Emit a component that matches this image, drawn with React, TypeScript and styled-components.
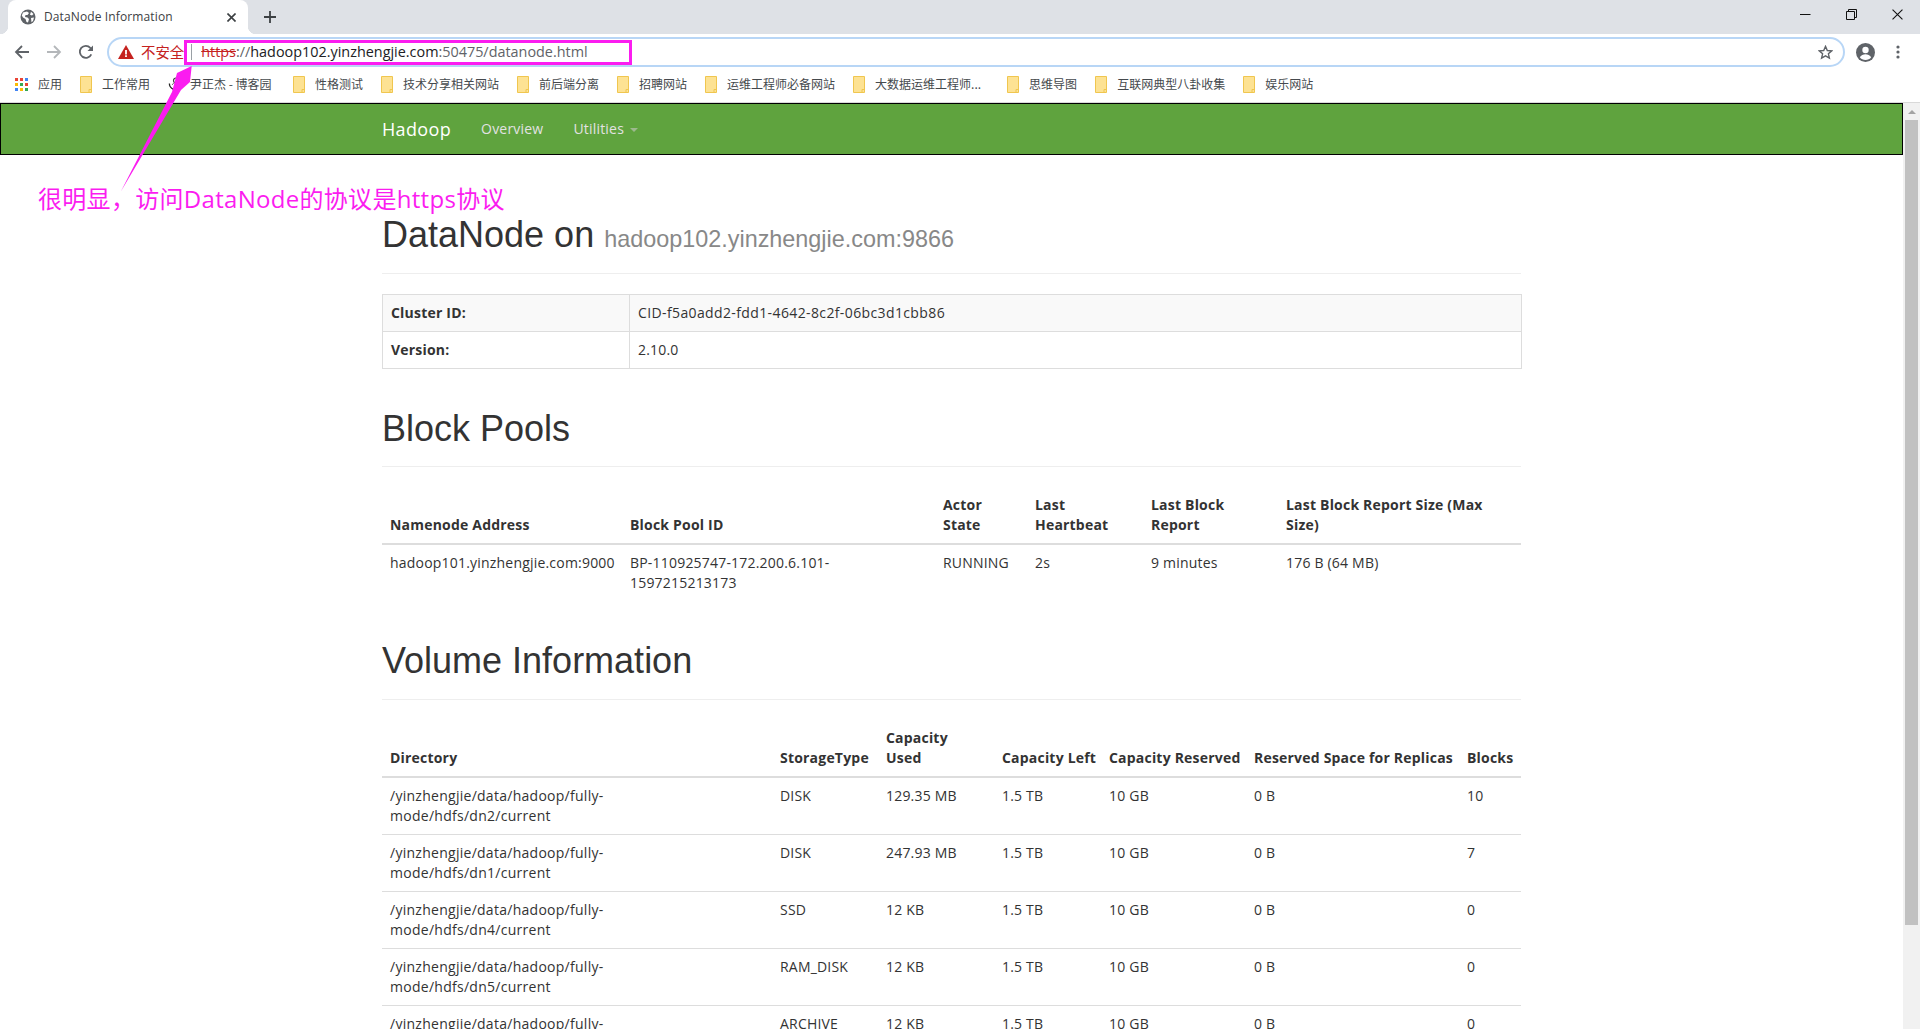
import React from "react";
import styled, { createGlobalStyle } from "styled-components";

const UI = `"Open Sans", "Noto Sans CJK SC", sans-serif`;
const CJK = `"Noto Sans CJK SC", "Open Sans", sans-serif`;
const HEAD = `"Liberation Sans", Arial, sans-serif`;
const MAGENTA = "#fb1cf0";

const Global = createGlobalStyle`
  html, body { margin: 0; padding: 0; height: 100%; overflow: hidden; background: #fff; }
  * { box-sizing: border-box; }
  body { font-family: ${UI}; font-size: 14px; line-height: 20px; color: #333; }
`;

const Screen = styled.div`
  position: relative;
  display: flex;
  flex-direction: column;
  width: 1920px;
  height: 1029px;
  overflow: hidden;
  background: #fff;
`;

const TabStrip = styled.div`
  display: flex;
  align-items: flex-start;
  height: 34px;
  flex: none;
  padding-left: 8px;
  background: #dee1e6;
`;

const Tab = styled.div`
  position: relative;
  display: flex;
  align-items: center;
  width: 240px;
  height: 34px;
  padding: 0 12px 0 12px;
  background: #fff;
  border-radius: 8px 8px 0 0;
  &::before, &::after {
    content: "";
    position: absolute;
    bottom: 0;
    width: 8px;
    height: 8px;
  }
  &::before { left: -8px; background: radial-gradient(circle at 0 0, #dee1e6 8px, #fff 8.5px); }
  &::after { right: -8px; background: radial-gradient(circle at 100% 0, #dee1e6 8px, #fff 8.5px); }
`;

const TabTitle = styled.span`
  flex: 1;
  margin-left: 8px;
  font-size: 12px;
  color: #3c4043;
  white-space: nowrap;
  letter-spacing: 0.12px;
`;

const NewTab = styled.div`
  display: flex;
  width: 16px;
  height: 34px;
  align-items: center;
  margin-left: 16px;
`;

const WindowControls = styled.div`
  display: flex;
  gap: 35px;
  margin-left: auto;
  padding: 9px 17px 0 0;
`;

const Toolbar = styled.div`
  display: flex;
  align-items: center;
  height: 33px;
  flex: none;
  padding: 3px 14px 0 14px;
  background: #fff;
`;

const NavIcons = styled.div`
  display: flex;
  align-items: center;
  gap: 16px;
  width: 93px;
`;

const Omnibox = styled.div`
  display: flex;
  align-items: center;
  width: 1738px;
  height: 30px;
  padding: 0 10px 0 9px;
  border: 2px solid #b8d6f6;
  border-radius: 15px;
  background: #fff;
`;

const Insecure = styled.span`
  margin-left: 7px;
  font-family: ${CJK};
  font-size: 14.4px;
  color: #c5221f;
  white-space: nowrap;
`;

const OmniDivider = styled.span`
  width: 1px;
  height: 16px;
  margin: 0 9px 0 7px;
  background: #9aa0a6;
`;

const Url = styled.span`
  flex: 1;
  font-size: 14.4px;
  color: #5f6368;
  white-space: nowrap;
`;

const UrlScheme = styled.span`
  color: #c5221f;
  text-decoration: line-through;
`;

const UrlHost = styled.span`
  color: #202124;
`;

const ToolbarEnd = styled.div`
  display: flex;
  align-items: center;
  gap: 21px;
  margin-left: 11px;
`;

const Bookmarks = styled.div`
  display: flex;
  align-items: center;
  gap: 18px;
  height: 36px;
  flex: none;
  padding: 0 0 1px 15px;
  border-bottom: 1px solid #d9d9d9;
  background: #fff;
`;

const Bookmark = styled.div`
  display: flex;
  align-items: center;
  gap: 10px;
  font-family: ${CJK};
  font-size: 12px;
  color: #45494d;
  white-space: nowrap;
`;

const BookmarkLabel = styled.span<{ $width?: number }>`
  display: block;
  ${(p) => (p.$width ? `width: ${p.$width}px;` : "")}
`;

const Viewport = styled.div`
  display: flex;
  flex: 1;
  min-height: 0;
`;

const Page = styled.div`
  flex: 1;
  min-width: 0;
  overflow: hidden;
`;

const Navbar = styled.nav`
  display: flex;
  height: 52px;
  margin-bottom: 60px;
  border: 1px solid #000;
  background: #5fa33e;
  padding-left: 366px;
  letter-spacing: 0.2px;
`;

const NavBrand = styled.a`
  padding: 15px;
  font-size: 18px;
  line-height: 20px;
  color: #fff;
  letter-spacing: 0.35px;
`;

const NavLink = styled.a`
  display: flex;
  align-items: flex-start;
  padding: 15px;
  font-size: 14px;
  line-height: 20px;
  color: #e2e2e2;
`;

const Caret = styled.span`
  width: 0;
  height: 0;
  margin: 9px 0 0 6px;
  border-top: 4px solid #9db98e;
  border-left: 4px solid transparent;
  border-right: 4px solid transparent;
`;

const Container = styled.main`
  width: 1139px;
  margin-left: 382px;
`;

const PageHeader = styled.header`
  margin: 40px 0 20px;
  padding-bottom: 9px;
  border-bottom: 1px solid #eee;
`;

const Heading = styled.h1`
  margin: 0 0 9px;
  font-family: ${HEAD};
  font-size: 36px;
  font-weight: 500;
  line-height: 39.6px;
  color: #333;
`;

const HeadingSmall = styled.small`
  font-size: 65%;
  font-weight: 400;
  line-height: 1;
  color: #888;
`;

const Table = styled.table`
  width: 100%;
  table-layout: fixed;
  border-collapse: collapse;
  margin-bottom: 20px;
  letter-spacing: 0.2px;
`;

const Cell = styled.td<{ $bordered?: boolean }>`
  padding: 8px;
  vertical-align: top;
  border-top: 1px solid #ddd;
  tbody tr:first-child > & { border-top: ${(p) => (p.$bordered ? "1px solid #ddd" : "0")}; }
  ${(p) => (p.$bordered ? "border: 1px solid #ddd;" : "")}
`;

const ClusterId = styled.span`
  letter-spacing: 0.38px;
`;

const DirPath = styled.span`
  display: block;
  max-width: 300px;
  letter-spacing: 0.27px;
`;

const HeadCell = styled.th<{ $bordered?: boolean; $nowrap?: boolean }>`
  padding: 8px;
  text-align: left;
  font-weight: 700;
  vertical-align: bottom;
  border-bottom: 2px solid #ddd;
  ${(p) => (p.$nowrap ? "white-space: nowrap;" : "")}
  ${(p) => (p.$bordered ? "border: 1px solid #ddd; vertical-align: top;" : "")}
`;

const StripedRow = styled.tr`
  background: #f9f9f9;
`;

const ScrollTrack = styled.div`
  display: flex;
  flex-direction: column;
  align-items: center;
  width: 17px;
  flex: none;
  padding-top: 7px;
  background: #f1f1f1;
`;

const ScrollUp = styled.span`
  width: 0;
  height: 0;
  border-bottom: 4px solid #a3a3a3;
  border-left: 4px solid transparent;
  border-right: 4px solid transparent;
`;

const ScrollThumb = styled.div`
  width: 13px;
  height: 805px;
  margin-top: 6px;
  background: #c1c1c1;
`;

const Overlay = styled.svg`
  position: absolute;
  left: 0;
  top: 0;
  pointer-events: none;
`;

const UrlHighlight = styled.div`
  position: absolute;
  left: 184px;
  top: 40px;
  width: 448px;
  height: 25px;
  border: 3px solid ${MAGENTA};
`;

const Annotation = styled.div`
  position: absolute;
  left: 38px;
  top: 181px;
  font-family: "Open Sans", "Noto Sans CJK SC", sans-serif;
  font-size: 24px;
  line-height: 36px;
  letter-spacing: 0.3px;
  color: ${MAGENTA};
  white-space: nowrap;
`;

const Folder = () => (
  <svg width="12" height="17" viewBox="0 0 12 17">
    <path d="M.5.5h11v16H.5z" fill="#fde293" stroke="#f0c64f" />
    <path d="M9 16.5v-3h2.500" fill="none" stroke="#f0c64f" />
  </svg>
);

const Globe = () => (
  <svg width="16" height="16" viewBox="0 0 16 16">
    <circle cx="8" cy="8" r="7.500" fill="#5f6368" />
    <path d="M3 3.500 7 2.500 9 4 7.500 6 5.500 6 5 8 7.500 8.500 9 10 8 13.500 6.500 13 5.500 10 3 8.500 1.800 6.500zM11 2.800l2.500 2.200-1.500 1.500-2-.7zM11 9l3-.5-1 3.500-1.500 1.200z" fill="#fff" />
  </svg>
);

const CloseGlyph = ({ size = 9, color = "#3c4043", width = 1.8 }: { size?: number; color?: string; width?: number }) => (
  <svg width={size} height={size} viewBox="0 0 10 10">
    <path d="M.5.500l9 9M9.500.500l-9 9" stroke={color} strokeWidth={width} fill="none" />
  </svg>
);

const PlusGlyph = () => (
  <svg width="12" height="12" viewBox="0 0 12 12">
    <path d="M6 0v12M0 6h12" stroke="#3c4043" strokeWidth="1.800" />
  </svg>
);

const MinGlyph = () => (
  <svg width="11" height="11" viewBox="0 0 11 11">
    <path d="M0 5.500h10.500" stroke="#111" strokeWidth="1" />
  </svg>
);

const RestoreGlyph = () => (
  <svg width="11" height="11" viewBox="0 0 11 11">
    <path d="M.5 2.500h8v8h-8zM2.500 2.500v-2h8v8h-2" fill="none" stroke="#111" strokeWidth="1" />
  </svg>
);

const Back = ({ color }: { color: string }) => (
  <svg width="16" height="16" viewBox="0 0 16 16">
    <path d="M15 8H2.500M8 2 2 8l6 6" fill="none" stroke={color} strokeWidth="1.800" />
  </svg>
);

const Forward = ({ color }: { color: string }) => (
  <svg width="16" height="16" viewBox="0 0 16 16">
    <path d="M1 8h12.500M8 2l6 6-6 6" fill="none" stroke={color} strokeWidth="1.800" />
  </svg>
);

const Reload = () => (
  <svg width="16" height="16" viewBox="0 0 16 16">
    <path d="M13.300 10.300A6 6 0 1 1 12.300 3.800L14 5.500" fill="none" stroke="#5f6368" strokeWidth="1.800" />
    <path d="M15 1.500V7H9.500z" fill="#5f6368" />
  </svg>
);

const Warning = () => (
  <svg width="16" height="14" viewBox="0 0 16 14">
    <path d="M8 0l8 14H0z" fill="#c5221f" />
    <path d="M7.100 5h1.800v4.500H7.100zM7.100 10.300h1.800V12H7.100z" fill="#fff" />
  </svg>
);

const StarIcon = () => (
  <svg width="15" height="15" viewBox="0 0 15 15">
    <path d="M7.500 1.400l1.800 4.100 4.400.4-3.300 2.900 1 4.300-3.900-2.300-3.900 2.300 1-4.300L1.300 5.900l4.400-.4z" fill="none" stroke="#5f6368" strokeWidth="1.400" />
  </svg>
);

const Avatar = () => (
  <svg width="19" height="19" viewBox="0 0 19 19">
    <circle cx="9.500" cy="9.500" r="9.500" fill="#5f6368" />
    <circle cx="9.500" cy="7" r="3.200" fill="#fff" />
    <path d="M3.800 14.200c1.200-2 3.500-3 5.700-3s4.500 1 5.700 3c-1.300 1.700-3.400 2.800-5.700 2.800s-4.400-1.100-5.700-2.800z" fill="#fff" />
  </svg>
);

const Dots = () => (
  <svg width="4" height="14" viewBox="0 0 4 14">
    <circle cx="2" cy="2" r="1.600" fill="#5f6368" />
    <circle cx="2" cy="7" r="1.600" fill="#5f6368" />
    <circle cx="2" cy="12" r="1.600" fill="#5f6368" />
  </svg>
);

const AppsGrid = () => {
  const c = ["#ea4335", "#ea4335", "#4285f4", "#fbbc04", "#34a853", "#ea4335", "#4285f4", "#fbbc04", "#34a853"];
  return (
    <svg width="13" height="13" viewBox="0 0 13 13">
      {c.map((f, i) => (
        <rect key={i} x={(i % 3) * 5} y={Math.floor(i / 3) * 5} width="3" height="3" fill={f} />
      ))}
    </svg>
  );
};

const BlogIcon = () => (
  <svg width="12" height="16" viewBox="0 0 12 16">
    <circle cx="8" cy="4.500" r="2.500" fill="none" stroke="#444" strokeWidth="1.200" />
    <path d="M1.500 7.500C1 10 3 12 5.500 13.500L9 11.500" fill="none" stroke="#222" strokeWidth="1.300" />
    <path d="M6.200 6.500 4 9" fill="none" stroke="#777" strokeWidth="1" />
  </svg>
);

const bookmarks: { label: string; width?: number }[] = [
  { label: "工作常用" },
  { label: "尹正杰 - 博客园", width: 85 },
  { label: "性格测试" },
  { label: "技术分享相关网站" },
  { label: "前后端分离" },
  { label: "招聘网站" },
  { label: "运维工程师必备网站" },
  { label: "大数据运维工程师...", width: 114 },
  { label: "思维导图" },
  { label: "互联网典型八卦收集" },
  { label: "娱乐网站" },
];

const poolWidths = [240, 313, 92, 116, 135, 243];
const poolHead = ["Namenode Address", "Block Pool ID", "Actor State", "Last Heartbeat", "Last Block Report", "Last Block Report Size (Max Size)"];
const poolRow = ["hadoop101.yinzhengjie.com:9000", "BP-110925747-172.200.6.101-1597215213173", "RUNNING", "2s", "9 minutes", "176 B (64 MB)"];

const volWidths = [390, 106, 116, 107, 145, 213, 62];
const volHead = ["Directory", "StorageType", "Capacity Used", "Capacity Left", "Capacity Reserved", "Reserved Space for Replicas", "Blocks"];
const volNoWrap = ["Capacity Left", "Capacity Reserved", "Reserved Space for Replicas"];
const volRows = [
  ["/yinzhengjie/data/hadoop/fully-mode/hdfs/dn2/current", "DISK", "129.35 MB", "10"],
  ["/yinzhengjie/data/hadoop/fully-mode/hdfs/dn1/current", "DISK", "247.93 MB", "7"],
  ["/yinzhengjie/data/hadoop/fully-mode/hdfs/dn4/current", "SSD", "12 KB", "0"],
  ["/yinzhengjie/data/hadoop/fully-mode/hdfs/dn5/current", "RAM_DISK", "12 KB", "0"],
  ["/yinzhengjie/data/hadoop/fully-mode/hdfs/dn3/current", "ARCHIVE", "12 KB", "0"],
];

const DataTable = ({ widths, head, rows, noWrap = [] }: { widths: number[]; head: string[]; rows: React.ReactNode[][]; noWrap?: string[] }) => (
  <Table>
    <colgroup>
      {widths.map((w, i) => (
        <col key={i} width={w} />
      ))}
    </colgroup>
    <thead>
      <tr>
        {head.map((h) => (
          <HeadCell key={h} $nowrap={noWrap.includes(h)}>
            {h}
          </HeadCell>
        ))}
      </tr>
    </thead>
    <tbody>
      {rows.map((r, i) => (
        <tr key={i}>
          {r.map((c, j) => (
            <Cell key={j}>{c}</Cell>
          ))}
        </tr>
      ))}
    </tbody>
  </Table>
);

export default function App() {
  return (
    <Screen>
      <Global />
      <TabStrip>
        <Tab>
          <Globe />
          <TabTitle>DataNode Information</TabTitle>
          <CloseGlyph />
        </Tab>
        <NewTab>
          <PlusGlyph />
        </NewTab>
        <WindowControls>
          <MinGlyph />
          <RestoreGlyph />
          <CloseGlyph size={11} color="#111" width={1} />
        </WindowControls>
      </TabStrip>
      <Toolbar>
        <NavIcons>
          <Back color="#5f6368" />
          <Forward color="#b4b7ba" />
          <Reload />
        </NavIcons>
        <Omnibox>
          <Warning />
          <Insecure>不安全</Insecure>
          <OmniDivider />
          <Url>
            <UrlScheme>https</UrlScheme>://<UrlHost>hadoop102.yinzhengjie.com</UrlHost>:50475/datanode.html
          </Url>
          <StarIcon />
        </Omnibox>
        <ToolbarEnd>
          <Avatar />
          <Dots />
        </ToolbarEnd>
      </Toolbar>
      <Bookmarks>
        <Bookmark>
          <AppsGrid />
          <BookmarkLabel>应用</BookmarkLabel>
        </Bookmark>
        {bookmarks.map((b, i) => (
          <Bookmark key={b.label}>
            {i === 1 ? <BlogIcon /> : <Folder />}
            <BookmarkLabel $width={b.width}>{b.label}</BookmarkLabel>
          </Bookmark>
        ))}
      </Bookmarks>
      <Viewport>
        <Page>
          <Navbar>
            <NavBrand>Hadoop</NavBrand>
            <NavLink>Overview</NavLink>
            <NavLink>
              Utilities
              <Caret />
            </NavLink>
          </Navbar>
          <Container>
            <PageHeader>
              <Heading>
                DataNode on <HeadingSmall>hadoop102.yinzhengjie.com:9866</HeadingSmall>
              </Heading>
            </PageHeader>
            <Table>
              <colgroup>
                <col width={247} />
                <col width={892} />
              </colgroup>
              <tbody>
                <StripedRow>
                  <HeadCell $bordered>Cluster ID:</HeadCell>
                  <Cell $bordered>
                    <ClusterId>CID-f5a0add2-fdd1-4642-8c2f-06bc3d1cbb86</ClusterId>
                  </Cell>
                </StripedRow>
                <tr>
                  <HeadCell $bordered>Version:</HeadCell>
                  <Cell $bordered>2.10.0</Cell>
                </tr>
              </tbody>
            </Table>
            <PageHeader>
              <Heading>Block Pools</Heading>
            </PageHeader>
            <DataTable widths={poolWidths} head={poolHead} rows={[poolRow]} />
            <PageHeader>
              <Heading>Volume Information</Heading>
            </PageHeader>
            <DataTable
              widths={volWidths}
              head={volHead}
              noWrap={volNoWrap}
              rows={volRows.map((r) => [<DirPath>{r[0]}</DirPath>, r[1], r[2], "1.5 TB", "10 GB", "0 B", r[3]])}
            />
          </Container>
        </Page>
        <ScrollTrack>
          <ScrollUp />
          <ScrollThumb />
        </ScrollTrack>
      </Viewport>
      <UrlHighlight />
      <Overlay width="300" height="210">
        <polygon points="120.700,191.700 172,92 177,73 191.700,66 190,82 181,90" fill={MAGENTA} />
      </Overlay>
      <Annotation>很明显，访问DataNode的协议是https协议</Annotation>
    </Screen>
  );
}
